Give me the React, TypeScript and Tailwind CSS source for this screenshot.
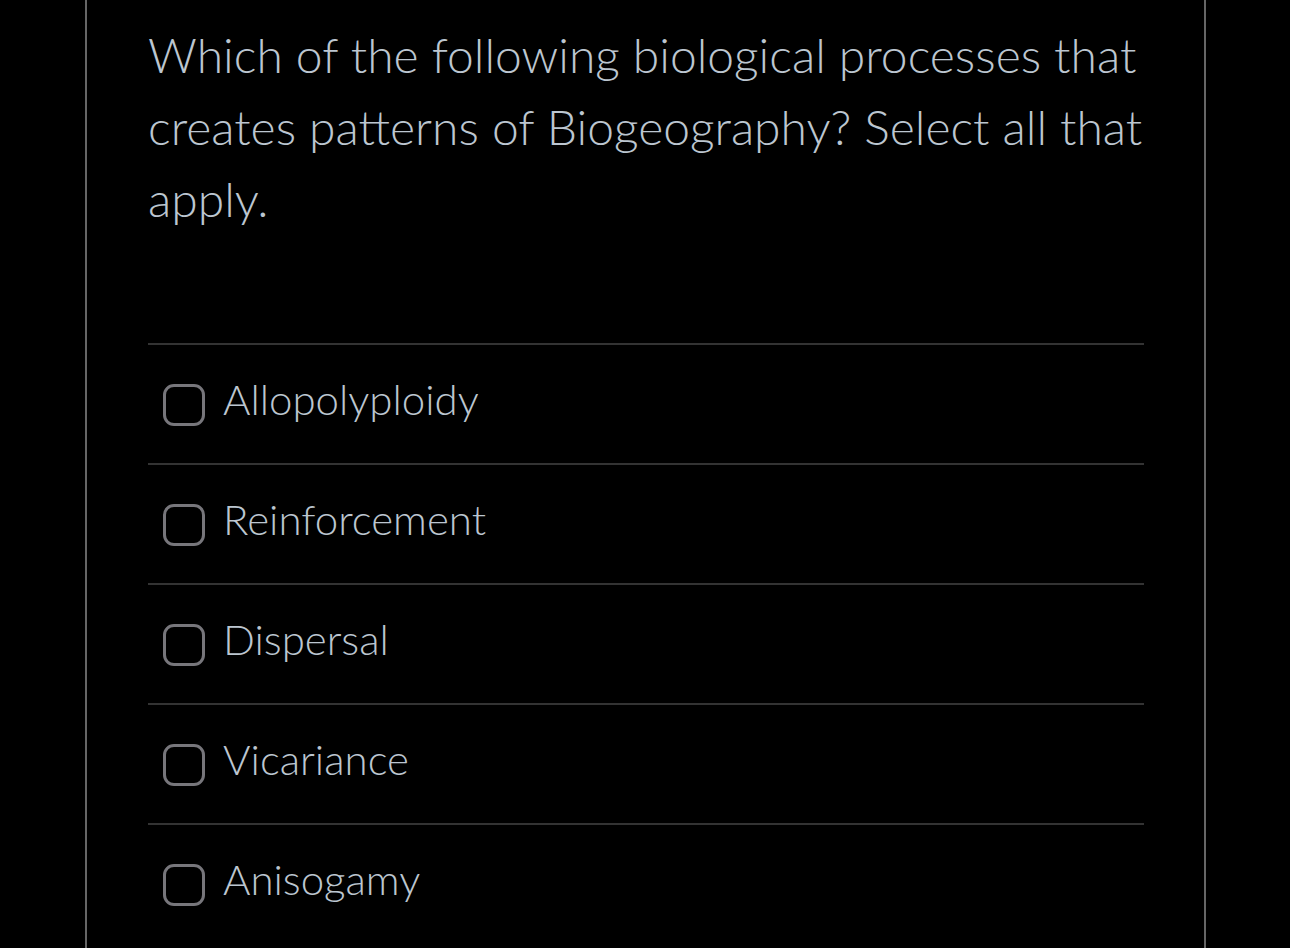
export default function App() {
  const options = ["Allopolyploidy", "Reinforcement", "Dispersal", "Vicariance", "Anisogamy"];
  return (
    <div className="w-[1290px] h-[948px] bg-black overflow-hidden flex" style={{ fontFamily: "'Lato Light', Lato, 'Noto Sans', sans-serif" }}>
      <div className="ml-[85px] w-[1121px] h-full border-l-2 border-r-2 border-[#666666] pl-[61px] pr-[61px] pt-[19px]">
        <div className="text-[48px] leading-[72px] font-light text-[#bcc6d0]">
          Which of the following biological processes that creates patterns of Biogeography? Select all that apply.
        </div>
        <div className="mt-[108px] w-[996px]">
          {options.map((o) => (
            <div key={o} className="border-t-2 border-[#333333] h-[120px] flex items-center pl-[15px]">
              <div className="w-[42px] h-[42px] rounded-[11px] border-[3px] border-[#77767b] shrink-0 mt-[2px]"></div>
              <span className="ml-[18px] text-[42px] font-light text-[#bcc6d0] leading-none mb-[11px]">{o}</span>
            </div>
          ))}
        </div>
      </div>
    </div>
  );
}
